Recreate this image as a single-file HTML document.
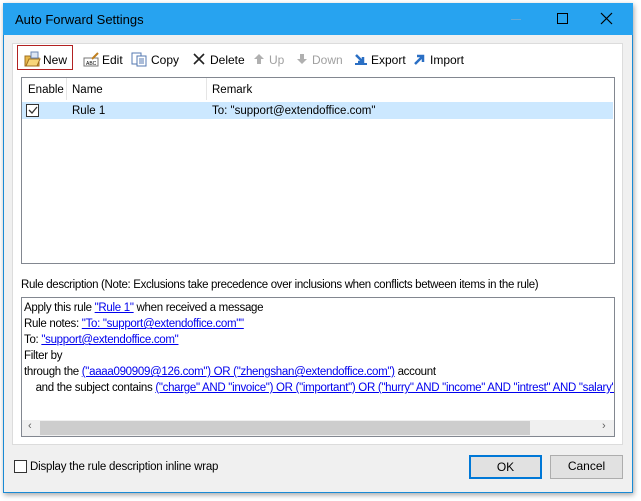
<!DOCTYPE html>
<html><head><meta charset="utf-8"><style>
*{margin:0;padding:0;box-sizing:border-box}
body{width:641px;height:501px;background:#fff;font-family:"Liberation Sans",sans-serif;font-size:11.5px;color:#000;position:relative;overflow:hidden}
.a{position:absolute}
.win{left:3px;top:3px;width:630px;height:490px;background:#f0f0f0;border:1px solid #1a8ad4;box-shadow:1px 2px 5px rgba(0,0,0,.35)}
.title{left:3px;top:3px;width:630px;height:32px;background:#27a3f0}
.link{color:#0000ee;text-decoration:underline}
.btn{border:1px solid #adadad;background:#e1e1e1;text-align:center;line-height:21px;font-size:12px}
.tb{top:53px;font-size:12px;line-height:14px}
.gray{color:#a0a0a0}
</style></head><body>
<div class="a win"></div>
<div class="a title"></div>
<div class="a" style="left:15px;top:12px;font-size:13px">Auto Forward Settings</div>
<div class="a" style="left:511px;top:19px;width:10px;height:1px;background:#6aa9d4"></div>
<div class="a" style="left:557px;top:13px;width:11px;height:11px;border:1px solid #000"></div>
<svg class="a" style="left:600px;top:12px" width="13" height="13"><path d="M1 1L12 12M12 1L1 12" stroke="#000" stroke-width="1.2"/></svg>

<div class="a" style="left:12px;top:43px;width:611px;height:402px;background:#fff;border:1px solid #dcdcdc"></div>
<div class="a" style="left:17px;top:45px;width:56px;height:25px;border:1px solid #b22222"></div>
<svg class="a" style="left:24px;top:51px" width="17" height="16"><path d="M1 5h5l1 2h8v8H1z" fill="#e8b84a" stroke="#a07020"/><path d="M2 15l3-7h11l-3 7z" fill="#f7d67a" stroke="#a07020"/><rect x="7" y="1" width="7" height="6" fill="#dde6f3" stroke="#6b87b3"/></svg>
<div class="a tb" style="left:43px">New</div>
<svg class="a" style="left:83px;top:52px" width="17" height="15"><rect x="1" y="6" width="14" height="8" fill="#fff" stroke="#777"/><text x="3" y="13" font-size="5" font-family="Liberation Sans">ABC</text><path d="M9 7L15 1" stroke="#c08020" stroke-width="2"/></svg>
<div class="a tb" style="left:102px">Edit</div>
<svg class="a" style="left:131px;top:52px" width="17" height="15"><rect x="1" y="1" width="9" height="11" fill="#fff" stroke="#5478b0"/><rect x="6" y="4" width="9" height="10" fill="#fff" stroke="#5478b0"/><path d="M8 7h5M8 9h5M8 11h5" stroke="#5478b0"/></svg>
<div class="a tb" style="left:151px">Copy</div>
<svg class="a" style="left:193px;top:53px" width="12" height="12"><path d="M1 1L11 11M11 1L1 11" stroke="#222" stroke-width="1.6"/></svg>
<div class="a tb" style="left:210px">Delete</div>
<svg class="a" style="left:253px;top:53px" width="12" height="12"><path d="M6 1L11 6H8v5H4V6H1z" fill="#b0b0b0"/></svg>
<div class="a tb gray" style="left:269px">Up</div>
<svg class="a" style="left:296px;top:53px" width="12" height="12"><path d="M6 11L11 6H8V1H4v5H1z" fill="#b0b0b0"/></svg>
<div class="a tb gray" style="left:312px">Down</div>
<svg class="a" style="left:354px;top:53px" width="14" height="13"><path d="M2 2l7 7M9 4v5H4" stroke="#2a6fc4" stroke-width="2.5" fill="none"/><path d="M1 11h12" stroke="#2a6fc4" stroke-width="2"/></svg>
<div class="a tb" style="left:371px">Export</div>
<svg class="a" style="left:413px;top:53px" width="13" height="13"><path d="M2 11l8-8M4 3h6v6" stroke="#2a6fc4" stroke-width="2.5" fill="none"/></svg>
<div class="a tb" style="left:430px">Import</div>

<div class="a" style="left:21px;top:77px;width:594px;height:187px;border:1px solid #828790;background:#fff"></div>
<div class="a" style="left:66px;top:78px;width:1px;height:22px;background:#e5e5e5"></div>
<div class="a" style="left:206px;top:78px;width:1px;height:22px;background:#e5e5e5"></div>
<div class="a" style="left:28px;top:84px">Enable</div>
<div class="a" style="left:72px;top:84px">Name</div>
<div class="a" style="left:212px;top:84px">Remark</div>
<div class="a" style="left:22px;top:102px;width:591px;height:17px;background:#cce8ff"></div>
<div class="a" style="left:26px;top:104px;width:13px;height:13px;border:1px solid #333;background:#fff"></div>
<svg class="a" style="left:27px;top:105px" width="11" height="11"><path d="M2 5l3 3 5-6" stroke="#333" stroke-width="1.3" fill="none"/></svg>
<div class="a" style="left:72px;top:105px">Rule 1</div>
<div class="a" style="left:212px;top:105px">To: "support@extendoffice.com"</div>

<div class="a" style="left:21px;top:279px;letter-spacing:-.33px">Rule description (Note: Exclusions take precedence over inclusions when conflicts between items in the rule)</div>
<div class="a" style="left:21px;top:297px;width:594px;height:140px;border:1px solid #828790;background:#fff;overflow:hidden">
<div style="position:absolute;left:2px;top:2px;line-height:16px;white-space:nowrap;letter-spacing:-.3px">
Apply this rule <span class="link">"Rule 1"</span> when received a message<br>
Rule notes: <span class="link">"To: "support@extendoffice.com""</span><br>
To: <span class="link">"support@extendoffice.com"</span><br>
Filter by<br>
through the <span class="link">("aaaa090909@126.com") OR ("zhengshan@extendoffice.com")</span> account<br>
&nbsp;&nbsp;&nbsp;&nbsp;and the subject contains <span class="link">("charge" AND "invoice") OR ("important") OR ("hurry" AND "income" AND "intrest" AND "salary"</span>
</div>
<div style="position:absolute;left:0;top:122px;width:592px;height:16px;background:#f0f0f0"></div>
<div style="position:absolute;left:18px;top:123px;width:490px;height:14px;background:#cdcdcd"></div>
<div style="position:absolute;left:6px;top:122px;font-size:11px;color:#606060">‹</div>
<div style="position:absolute;left:580px;top:122px;font-size:11px;color:#606060">›</div>
</div>

<div class="a" style="left:14px;top:460px;width:13px;height:13px;border:1px solid #333;background:#fff"></div>
<div class="a" style="left:30px;top:461px;letter-spacing:-.2px">Display the rule description inline wrap</div>
<div class="a btn" style="left:469px;top:455px;width:73px;height:24px;border:2px solid #0078d7;line-height:20px">OK</div>
<div class="a btn" style="left:550px;top:455px;width:73px;height:24px">Cancel</div>
</body></html>
